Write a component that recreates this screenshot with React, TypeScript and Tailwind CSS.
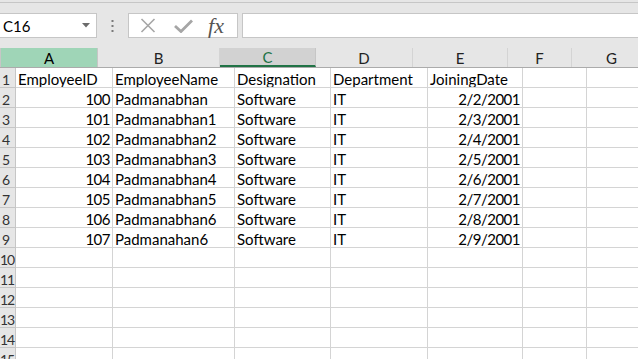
import React from "react";

const cols = [
  { key: "A", w: "w-[97px]" },
  { key: "B", w: "w-[122px]" },
  { key: "C", w: "w-[96px]" },
  { key: "D", w: "w-[97px]" },
  { key: "E", w: "w-[95px]" },
  { key: "F", w: "w-[64px]" },
  { key: "G", w: "w-[80px]" },
];

type Cell = { t: string; r?: boolean };

const data: Cell[][] = [
  [{ t: "EmployeeID" }, { t: "EmployeeName" }, { t: "Designation" }, { t: "Department" }, { t: "JoiningDate" }],
  [{ t: "100", r: true }, { t: "Padmanabhan" }, { t: "Software" }, { t: "IT" }, { t: "2/2/2001", r: true }],
  [{ t: "101", r: true }, { t: "Padmanabhan1" }, { t: "Software" }, { t: "IT" }, { t: "2/3/2001", r: true }],
  [{ t: "102", r: true }, { t: "Padmanabhan2" }, { t: "Software" }, { t: "IT" }, { t: "2/4/2001", r: true }],
  [{ t: "103", r: true }, { t: "Padmanabhan3" }, { t: "Software" }, { t: "IT" }, { t: "2/5/2001", r: true }],
  [{ t: "104", r: true }, { t: "Padmanabhan4" }, { t: "Software" }, { t: "IT" }, { t: "2/6/2001", r: true }],
  [{ t: "105", r: true }, { t: "Padmanabhan5" }, { t: "Software" }, { t: "IT" }, { t: "2/7/2001", r: true }],
  [{ t: "106", r: true }, { t: "Padmanabhan6" }, { t: "Software" }, { t: "IT" }, { t: "2/8/2001", r: true }],
  [{ t: "107", r: true }, { t: "Padmanahan6" }, { t: "Software" }, { t: "IT" }, { t: "2/9/2001", r: true }],
];

const font = { fontFamily: "Lato, 'Open Sans', sans-serif" };

export default function App() {
  const rows = Array.from({ length: 15 }, (_, i) => i);
  return (
    <div className="w-[638px] h-[359px] overflow-hidden bg-white text-black" style={font}>
      {/* formula bar */}
      <div className="h-[48px] bg-[#e6e6e6] flex flex-col">
        <div className="h-[2px] bg-[#e6e6e6]" />
        <div className="h-[1px] bg-[#c6c6c6]" />
        <div className="h-[10px]" />
        <div className="flex items-stretch h-[25px]">
          <div className="w-[97px] bg-white border border-l-0 border-[#c6c6c6] flex items-center justify-between pl-[3px] pr-[6px]">
            <span className="text-[15px] leading-none pt-[1px]">C16</span>
            <svg width="8" height="5" viewBox="0 0 8 5"><path d="M0 0 H8 L4 4.5 Z" fill="#6b6b6b" /></svg>
          </div>
          <div className="w-[31px] flex items-center justify-center">
            <svg width="3" height="12" viewBox="0 0 3 12">
              <rect x="0.5" y="0" width="2" height="2" fill="#7a7a7a" />
              <rect x="0.5" y="5" width="2" height="2" fill="#7a7a7a" />
              <rect x="0.5" y="10" width="2" height="2" fill="#7a7a7a" />
            </svg>
          </div>
          <div className="w-[110px] bg-white border border-[#c6c6c6] flex items-center">
            <div className="w-[36px] flex justify-center pl-[2px]">
              <svg width="16" height="15" viewBox="0 0 16 15">
                <path d="M1.5 1 L14.5 14 M14.5 1 L1.5 14" stroke="#a6a6a6" strokeWidth="1.6" />
              </svg>
            </div>
            <div className="w-[36px] flex justify-center">
              <svg width="19" height="14" viewBox="0 0 19 14">
                <path d="M1 7 L7 12.5 L18 1.5" stroke="#a6a6a6" strokeWidth="2.8" fill="none" />
              </svg>
            </div>
            <div className="flex-1 flex justify-center pr-[6px]">
              <span className="text-[22px] leading-none italic text-[#555]" style={{ fontFamily: "'Liberation Serif', serif" }}>fx</span>
            </div>
          </div>
          <div className="w-[4px]" />
          <div className="flex-1 bg-white border border-r-0 border-[#c6c6c6]" />
        </div>
      </div>
      {/* column headers */}
      <div className="flex h-[20px] bg-[#e6e6e6] border-b border-[#ababab]">
        <div className="w-[16px] border-r border-[#c6c6c6] relative">
          <svg className="absolute right-[2px] bottom-[2px]" width="11" height="11" viewBox="0 0 11 11">
            <path d="M11 0 V11 H0 Z" fill="#c0c0c0" />
          </svg>
        </div>
        {cols.map((c) => {
          const sel = c.key === "C";
          const green = c.key === "A";
          return (
            <div
              key={c.key}
              className={
                c.w +
                " shrink-0 flex items-center justify-center text-[15px] pt-[2px] border-r " +
                (sel
                  ? "bg-[#d2d2d2] text-[#217346] border-[#c6c6c6] border-b-2 border-b-[#217346]"
                  : green
                  ? "bg-[#9fd5b7] border-[#c6c6c6]"
                  : "border-[#d4d4d4] text-[#222]")
              }
            >
              {c.key}
            </div>
          );
        })}
      </div>
      {/* rows */}
      {rows.map((i) => (
        <div key={i} className="flex h-[20px]">
          <div
            className={
              "w-[16px] shrink-0 bg-[#e6e6e6] border-r border-b border-[#c6c6c6] flex items-center pt-[3px] text-[14px] text-[#333] whitespace-nowrap " +
              (i + 1 >= 10 ? "pl-0 tracking-[-1px]" : "pl-[2px]")
            }
          >
            {i + 1}
          </div>
          {cols.map((c, j) => {
            const cell = data[i]?.[j];
            return (
              <div
                key={c.key}
                className={
                  c.w +
                  " shrink-0 border-r border-b border-[#d4d4d4] flex items-center pt-[3px] text-[15px] whitespace-nowrap overflow-hidden px-[2px] " +
                  (cell?.r ? "justify-end tracking-[-0.5px]" : "justify-start")
                }
              >
                {cell?.t}
              </div>
            );
          })}
        </div>
      ))}
    </div>
  );
}
